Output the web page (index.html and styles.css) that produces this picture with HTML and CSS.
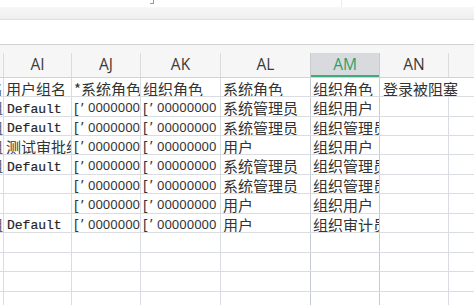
FILE: index.html
```html
<!DOCTYPE html>
<html>
<head>
<meta charset="utf-8">
<link rel="stylesheet" href="styles.css">
</head>
<body>
<div class="page">
  <div class="top1"><span class="corner"></span><span class="tick"></span></div>
  <div class="top2"></div>
  <div class="formula"></div>
  <div class="hpad"></div>
  <div class="row hdr">
    <div class="c"></div>
    <div class="c">AI</div>
    <div class="c">AJ</div>
    <div class="c">AK</div>
    <div class="c sel-l">AL</div>
    <div class="c sel">AM</div>
    <div class="c">AN</div>
    <div class="c last"></div>
  </div>
  <div class="row h19">
    <div class="c stub"><span>名</span></div>
    <div class="c">用户组名</div>
    <div class="c">*系统角色</div>
    <div class="c">组织角色</div>
    <div class="c sel-l">系统角色</div>
    <div class="c sel-c">组织角色</div>
    <div class="c ovf">登录被阻塞</div>
    <div class="c last"></div>
  </div>
  <div class="row h20">
    <div class="c stub"><span>组</span></div>
    <div class="c"><span class="lat">Default</span></div>
    <div class="c"><span class="q">[</span><span class="q">’</span><span class="num">00000000</span></div>
    <div class="c"><span class="q">[</span><span class="q">’</span><span class="num">00000000</span></div>
    <div class="c sel-l">系统管理员</div>
    <div class="c sel-c">组织用户</div>
    <div class="c"></div>
    <div class="c last"></div>
  </div>
  <div class="row h19">
    <div class="c stub"><span>组</span></div>
    <div class="c"><span class="lat">Default</span></div>
    <div class="c"><span class="q">[</span><span class="q">’</span><span class="num">00000000</span></div>
    <div class="c"><span class="q">[</span><span class="q">’</span><span class="num">00000000</span></div>
    <div class="c sel-l">系统管理员</div>
    <div class="c sel-c">组织管理员</div>
    <div class="c"></div>
    <div class="c last"></div>
  </div>
  <div class="row h19">
    <div class="c stub"><span>组</span></div>
    <div class="c">测试审批组</div>
    <div class="c"><span class="q">[</span><span class="q">’</span><span class="num">00000000</span></div>
    <div class="c"><span class="q">[</span><span class="q">’</span><span class="num">00000000</span></div>
    <div class="c sel-l">用户</div>
    <div class="c sel-c">组织用户</div>
    <div class="c"></div>
    <div class="c last"></div>
  </div>
  <div class="row h20">
    <div class="c stub"><span>组</span></div>
    <div class="c"><span class="lat">Default</span></div>
    <div class="c"><span class="q">[</span><span class="q">’</span><span class="num">00000000</span></div>
    <div class="c"><span class="q">[</span><span class="q">’</span><span class="num">00000000</span></div>
    <div class="c sel-l">系统管理员</div>
    <div class="c sel-c">组织管理员</div>
    <div class="c"></div>
    <div class="c last"></div>
  </div>
  <div class="row h19">
    <div class="c stub"></div>
    <div class="c"></div>
    <div class="c"><span class="q">[</span><span class="q">’</span><span class="num">00000000</span></div>
    <div class="c"><span class="q">[</span><span class="q">’</span><span class="num">00000000</span></div>
    <div class="c sel-l">系统管理员</div>
    <div class="c sel-c">组织管理员</div>
    <div class="c"></div>
    <div class="c last"></div>
  </div>
  <div class="row h20">
    <div class="c stub"></div>
    <div class="c"></div>
    <div class="c"><span class="q">[</span><span class="q">’</span><span class="num">00000000</span></div>
    <div class="c"><span class="q">[</span><span class="q">’</span><span class="num">00000000</span></div>
    <div class="c sel-l">用户</div>
    <div class="c sel-c">组织用户</div>
    <div class="c"></div>
    <div class="c last"></div>
  </div>
  <div class="row h19">
    <div class="c stub"><span>组</span></div>
    <div class="c"><span class="lat">Default</span></div>
    <div class="c"><span class="q">[</span><span class="q">’</span><span class="num">00000000</span></div>
    <div class="c"><span class="q">[</span><span class="q">’</span><span class="num">00000000</span></div>
    <div class="c sel-l">用户</div>
    <div class="c sel-c">组织审计员</div>
    <div class="c"></div>
    <div class="c last"></div>
  </div>
  <div class="row h20">
    <div class="c stub"></div><div class="c"></div><div class="c"></div><div class="c"></div>
    <div class="c sel-l"></div><div class="c sel-c"></div><div class="c"></div><div class="c last"></div>
  </div>
  <div class="row h19">
    <div class="c stub"></div><div class="c"></div><div class="c"></div><div class="c"></div>
    <div class="c sel-l"></div><div class="c sel-c"></div><div class="c"></div><div class="c last"></div>
  </div>
  <div class="row h20">
    <div class="c stub"></div><div class="c"></div><div class="c"></div><div class="c"></div>
    <div class="c sel-l"></div><div class="c sel-c"></div><div class="c"></div><div class="c last"></div>
  </div>
  <div class="row h19">
    <div class="c stub"></div><div class="c"></div><div class="c"></div><div class="c"></div>
    <div class="c sel-l"></div><div class="c sel-c"></div><div class="c"></div><div class="c last"></div>
  </div>
</div>
</body>
</html>
```

FILE: styles.css
```css
html, body {
  margin: 0;
  padding: 0;
  background: #ffffff;
}
body {
  width: 474px;
  height: 305px;
  overflow: hidden;
  font-family: "Noto Sans CJK SC", "Noto Sans", sans-serif;
  color: #333333;
}
.page {
  width: 474px;
}
.top1 {
  height: 7px;
  display: flex;
  align-items: flex-start;
}
.corner {
  display: block;
  margin-left: 150px;
  width: 3px;
  height: 3px;
  border-right: 1px solid #9a9a9a;
  border-bottom: 1px solid #9a9a9a;
}
.tick {
  display: block;
  margin-left: 187px;
  width: 1px;
  height: 7px;
  background: #ececec;
}
.top2 {
  height: 12px;
  background: linear-gradient(#f7f7f7, #efefef);
  border-bottom: 1px solid #dedede;
}
.formula {
  height: 24px;
  background: #ffffff;
  border-bottom: 1px solid #d2d2d2;
}
.hpad {
  height: 8px;
  background: #f6f6f6;
}
.row {
  display: grid;
  grid-template-columns: 4px 68px 69px 80px 90px 69px 69px 1fr;
  border-bottom: 1px solid #d9dce0;
  box-sizing: border-box;
}
.h19 { height: 19px; }
.h20 { height: 20px; }
.hdr {
  height: 25px;
  background: #f6f6f6;
  border-bottom: 1px solid #d0d3d7;
}
.c {
  border-right: 1px solid #d9dce0;
  overflow: hidden;
  white-space: nowrap;
  display: flex;
  align-items: center;
  padding-left: 2px;
  padding-top: 2px;
  font-size: 15px;
  line-height: 1;
  min-width: 0;
}
.hdr .c {
  justify-content: center;
  padding-left: 0;
  padding-top: 0;
  font-family: "Open Sans", "Noto Sans", sans-serif;
  font-size: 15.5px;
  color: #3a3a3a;
  border-right-color: #dcdcdc;
}
.hdr .c.sel {
  background: #d8dadd;
  color: #2f9e6c;
  box-shadow: inset 0 -2px 0 #3faa7c;
  border-right-color: #c9ccd1;
}
.hdr .c.sel-l {
  border-right-color: #c9ccd1;
}
.c.sel-l, .c.sel-c {
  border-right-color: #c8cdd5;
}
.c.stub {
  padding-left: 0;
  justify-content: flex-end;
  color: #5a6070;
}
.c.stub span {
  flex: none;
}
.c.ovf {
  overflow: visible;
  border-right-color: transparent;
  padding-left: 3px;
  position: relative;
  z-index: 1;
}
.c.last {
  border-right: none;
}
.lat {
  font-family: "Liberation Mono", "DejaVu Sans Mono", monospace;
  font-size: 13px;
  color: #262626;
  padding-left: 1px;
  margin-top: 3px;
  -webkit-text-stroke: 0.2px #262626;
}
.q {
  display: inline-block;
  width: 7px;
  font-family: "Noto Sans", sans-serif;
  font-size: 14px;
  flex: none;
}
.num {
  font-family: "Noto Sans", sans-serif;
  font-size: 13px;
  flex: none;
}
```
